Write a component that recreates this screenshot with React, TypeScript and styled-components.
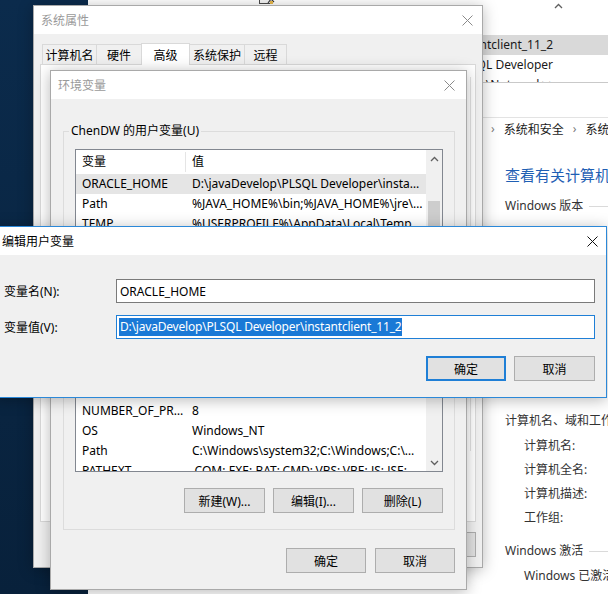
import React from "react";
import styled, { createGlobalStyle, css } from "styled-components";

const GlobalStyle = createGlobalStyle`
  html, body { margin: 0; padding: 0; background: #0a2846; }
  body {
    font-family: "Noto Sans", "Noto Sans CJK SC", sans-serif;
    font-size: 12px;
    color: #000;
  }
  * { box-sizing: border-box; }
`;

const Desktop = styled.div`
  position: relative;
  width: 608px;
  height: 594px;
  overflow: hidden;
  background: linear-gradient(180deg, #0b2b4c 0%, #08213b 100%);
`;

const Win = styled.div<{ $x: number; $y: number; $w: number; $h: number; $z: number; $active?: boolean }>`
  position: absolute;
  left: ${(p) => p.$x}px;
  top: ${(p) => p.$y}px;
  width: ${(p) => p.$w}px;
  height: ${(p) => p.$h}px;
  z-index: ${(p) => p.$z};
  display: flex;
  flex-direction: column;
  background: #f0f0f0;
  border: 1px solid ${(p) => (p.$active ? "#2b88d8" : "#a9a9a9")};
  box-shadow: 0 2px 14px rgba(0, 0, 0, 0.28);
`;

const TitleBar = styled.div<{ $active?: boolean }>`
  height: 28px;
  flex: none;
  display: flex;
  align-items: center;
  background: #fff;
  padding-left: 7px;
  color: ${(p) => (p.$active ? "#000" : "#9a9a9a")};
`;

const TitleText = styled.span`
  flex: 1;
  white-space: nowrap;
`;

const CloseBox = styled.div<{ $w: number; $active?: boolean }>`
  width: ${(p) => p.$w}px;
  height: 100%;
  display: flex;
  align-items: center;
  justify-content: center;
  color: ${(p) => (p.$active ? "#111" : "#8a8a8a")};
`;

const CloseIcon = () => (
  <svg width="11" height="11" viewBox="0 0 11 11">
    <path d="M0.5 0.5 L10.5 10.5 M10.5 0.5 L0.5 10.5" stroke="currentColor" strokeWidth="1" fill="none" />
  </svg>
);

const Chevron = ({ dir }: { dir: "up" | "down" }) => (
  <svg width="9" height="6" viewBox="0 0 9 6">
    <polyline
      points={dir === "up" ? "1,5 4.5,1.5 8,5" : "1,1 4.5,4.5 8,1"}
      fill="none"
      stroke="#5f5f5f"
      strokeWidth="1.3"
    />
  </svg>
);

/* ---------- generic controls ---------- */

const Btn = styled.div<{ $w: number; $default?: boolean }>`
  width: ${(p) => p.$w}px;
  height: 25px;
  flex: none;
  display: flex;
  align-items: center;
  justify-content: center;
  background: #e1e1e1;
  border: 1px solid ${(p) => (p.$default ? "#1f7fd6" : "#adadad")};
  ${(p) =>
    p.$default &&
    css`
      box-shadow: inset 0 0 0 1px #1f7fd6;
    `}
  white-space: nowrap;
`;

const ButtonRow = styled.div<{ $mt: number; $gap: number }>`
  display: flex;
  justify-content: flex-end;
  gap: ${(p) => p.$gap}px;
  margin-top: ${(p) => p.$mt}px;
  flex: none;
`;

/* ---------- system properties ---------- */

const SysBody = styled.div`
  flex: 1;
  display: flex;
  flex-direction: column;
  padding: 9px 6px 0 6px;
`;

const TabStrip = styled.div`
  display: flex;
  align-items: flex-end;
  height: 21px;
  padding-left: 3px;
`;

const Tab = styled.div<{ $w: number; $selected?: boolean }>`
  width: ${(p) => p.$w}px;
  height: ${(p) => (p.$selected ? 22 : 20)}px;
  margin-left: -1px;
  display: flex;
  align-items: center;
  justify-content: center;
  border: 1px solid #d9d9d9;
  border-bottom: none;
  background: ${(p) => (p.$selected ? "#fff" : "#f0f0f0")};
  position: relative;
  z-index: ${(p) => (p.$selected ? 2 : 1)};
  margin-bottom: ${(p) => (p.$selected ? -1 : 0)}px;
  white-space: nowrap;
`;

const TabPanel = styled.div`
  height: 458px;
  background: #fff;
  border: 1px solid #d9d9d9;
  flex: none;
  display: flex;
  justify-content: flex-end;
  padding: 0 4px;
`;

const PanelRule = styled.div`
  width: 1px;
  background: #e3e3e3;
  margin: 12px 0 70px;
`;

/* ---------- environment variables ---------- */

const EnvBody = styled.div`
  flex: 1;
  display: flex;
  flex-direction: column;
  padding: 24px 11px 0 12px;
`;

const Group = styled.fieldset<{ $mt?: number }>`
  margin: ${(p) => p.$mt ?? 0}px 0 0 0;
  padding: 10px 0 16px 0;
  border: 1px solid #dcdcdc;
  min-width: 0;
`;

const GroupLegend = styled.legend`
  margin-left: 5px;
  padding: 0 2px;
  line-height: 16px;
  font-size: 12px;
  white-space: nowrap;
`;

const GroupInner = styled.div`
  display: flex;
  flex-direction: column;
  padding: 0 11px;
`;

const ListBox = styled.div<{ $h: number }>`
  height: ${(p) => p.$h}px;
  border: 1px solid #828790;
  background: #fff;
  display: flex;
  overflow: hidden;
`;

const ListContent = styled.div`
  flex: 1;
  min-width: 0;
  display: flex;
  flex-direction: column;
  overflow: hidden;
`;

const HeaderRow = styled.div`
  height: 24px;
  flex: none;
  display: flex;
  align-items: center;
`;

const HeaderCell = styled.div<{ $first?: boolean }>`
  ${(p) =>
    p.$first
      ? css`
          width: 110px;
          border-right: 1px solid #e5e5e5;
        `
      : css`
          flex: 1;
        `}
  height: 20px;
  line-height: 20px;
  padding-left: 6px;
  flex: ${(p) => (p.$first ? "none" : 1)};
`;

const Row = styled.div<{ $selected?: boolean }>`
  height: 20px;
  flex: none;
  display: flex;
  line-height: 20px;
  background: ${(p) => (p.$selected ? "#e5e5e5" : "transparent")};
`;

const Cell = styled.div<{ $first?: boolean }>`
  ${(p) =>
    p.$first
      ? css`
          width: 110px;
          flex: none;
          padding: 0 2px 0 6px;
        `
      : css`
          flex: 1;
          min-width: 0;
          padding: 0 2px 0 6px;
        `}
  white-space: nowrap;
  overflow: hidden;
  text-overflow: ellipsis;
`;

const ScrollBar = styled.div`
  width: 16px;
  flex: none;
  background: #f0f0f0;
  display: flex;
  flex-direction: column;
`;

const ScrollArrow = styled.div<{ $end?: boolean }>`
  height: 17px;
  flex: none;
  display: flex;
  align-items: center;
  justify-content: center;
  margin-top: ${(p) => (p.$end ? "auto" : "0")};
`;

const Thumb = styled.div<{ $mt: number; $h: number }>`
  margin: ${(p) => p.$mt}px 2px 0 2px;
  height: ${(p) => p.$h}px;
  background: #cdcdcd;
  flex: none;
`;

/* ---------- edit dialog ---------- */

const EditBody = styled.div`
  flex: 1;
  display: flex;
  flex-direction: column;
  padding: 24px 11px 15px 9px;
`;

const FormRow = styled.div<{ $mt: number }>`
  display: flex;
  align-items: center;
  height: 24px;
  margin-top: ${(p) => p.$mt}px;
`;

const FormLabel = styled.div`
  width: 112px;
  flex: none;
  white-space: nowrap;
`;

const TextBox = styled.div<{ $focused?: boolean }>`
  flex: 1;
  height: 24px;
  background: #fff;
  border: 1px solid ${(p) => (p.$focused ? "#1f7fd6" : "#7a7a7a")};
  padding-left: 2px;
  display: flex;
  align-items: center;
  white-space: nowrap;
  overflow: hidden;
`;

const PlainText = styled.span`
  padding-left: 1px;
`;

const Selection = styled.span`
  background: #1a79d6;
  color: #fff;
  line-height: 18px;
  padding: 0 1px;
  letter-spacing: -0.2px;
`;

/* ---------- explorer window behind ---------- */

const Explorer = styled.div`
  position: absolute;
  left: 88px;
  top: 0;
  width: 530px;
  height: 594px;
  z-index: 1;
  background: #fff;
  display: flex;
  flex-direction: column;
  overflow: hidden;
`;

const TopStrip = styled.div`
  height: 34px;
  flex: none;
  display: flex;
  align-items: flex-start;
`;

const TopIcon = styled.div`
  margin-left: 170px;
  margin-top: -11px;
  width: 17px;
  height: 16px;
`;

const TopChevron = styled.div`
  margin-left: 279px;
  margin-top: 3px;
  display: flex;
`;

const Dropdown = styled.div`
  position: absolute;
  left: 0;
  right: 0;
  top: 35px;
  height: 48px;
  overflow: hidden;
  background: #fff;
  border-bottom: 1px solid #c9c9c9;
  z-index: 2;
`;

const DropRow = styled.div<{ $hl?: boolean }>`
  height: 20px;
  line-height: 20px;
  text-align: right;
  padding-right: 65px;
  background: ${(p) => (p.$hl ? "#d9d9d9" : "#fff")};
  white-space: nowrap;
  color: #1a1a1a;
`;

const AddressBar = styled.div`
  margin-top: 83px;
  height: 22px;
  flex: none;
  border-top: 1px solid #e3e3e3;
  display: flex;
  align-items: center;
  gap: 9px;
  padding-left: 403px;
  white-space: nowrap;
`;

const Crumb = styled.span<{ $sep?: boolean }>`
  color: ${(p) => (p.$sep ? "#7a7a7a" : "#1a1a1a")};
`;

const Main = styled.div`
  display: flex;
  flex-direction: column;
  padding-left: 417px;
  white-space: nowrap;
`;

const Heading = styled.div`
  margin-top: 24px;
  font-size: 15px;
  line-height: 24px;
  color: #1f5fb4;
`;

const Section = styled.div<{ $mt: number }>`
  margin-top: ${(p) => p.$mt}px;
  display: flex;
  align-items: center;
  line-height: 18px;
  color: #333;
  &::after {
    content: "";
    flex: 1;
    height: 1px;
    background: #dadada;
    margin-left: 6px;
  }
`;

const InfoItem = styled.div<{ $mt?: number }>`
  margin-top: ${(p) => p.$mt ?? 0}px;
  padding-left: 19px;
  line-height: 24px;
  color: #333;
`;

/* ---------- data ---------- */

const userVars = [
  { name: "ORACLE_HOME", value: "D:\\javaDevelop\\PLSQL Developer\\instantclient_11_2", selected: true },
  { name: "Path", value: "%JAVA_HOME%\\bin;%JAVA_HOME%\\jre\\bin;C:\\Users\\ChenDW\\AppData" },
  { name: "TEMP", value: "%USERPROFILE%\\AppData\\Local\\Temp" },
  { name: "TMP", value: "%USERPROFILE%\\AppData\\Local\\Temp" },
];

const sysVars = [
  { name: "ComSpec", value: "C:\\Windows\\system32\\cmd.exe" },
  { name: "DriverData", value: "C:\\Windows\\System32\\Drivers\\DriverData" },
  { name: "NUMBER_OF_PROCESSORS", value: "8" },
  { name: "OS", value: "Windows_NT" },
  { name: "Path", value: "C:\\Windows\\system32;C:\\Windows;C:\\Windows\\System32\\Wbem;C:\\Windows" },
  { name: "PATHEXT", value: ".COM;.EXE;.BAT;.CMD;.VBS;.VBE;.JS;.JSE;.WSF;.WSH;.MSC" },
];

const tabs = [
  { label: "计算机名", w: 55 },
  { label: "硬件", w: 46 },
  { label: "高级", w: 49, selected: true },
  { label: "系统保护", w: 56 },
  { label: "远程", w: 43 },
];

type Var = { name: string; value: string; selected?: boolean };

const VarList = ({
  vars,
  height,
  thumbTop,
  thumbH,
}: {
  vars: Var[];
  height: number;
  thumbTop: number;
  thumbH: number;
}) => (
  <ListBox $h={height}>
    <ListContent>
      <HeaderRow>
        <HeaderCell $first>变量</HeaderCell>
        <HeaderCell>值</HeaderCell>
      </HeaderRow>
      {vars.map((v, i) => (
        <Row key={i} $selected={v.selected}>
          <Cell $first>{v.name}</Cell>
          <Cell>{v.value}</Cell>
        </Row>
      ))}
    </ListContent>
    <ScrollBar>
      <ScrollArrow>
        <Chevron dir="up" />
      </ScrollArrow>
      <Thumb $mt={thumbTop} $h={thumbH} />
      <ScrollArrow $end>
        <Chevron dir="down" />
      </ScrollArrow>
    </ScrollBar>
  </ListBox>
);

export default function App() {
  return (
    <>
      <GlobalStyle />
      <Desktop>
        <Explorer>
          <TopStrip>
            <TopIcon>
              <svg width="17" height="16" viewBox="0 0 17 16">
                <rect x="1.5" y="1.5" width="13" height="13" fill="#f4f4f4" stroke="#4a4a4a" />
                <path d="M10 14 L13 10 L16 13" stroke="#3a3a3a" strokeWidth="1.2" fill="none" />
                <rect x="12" y="12" width="3" height="3" fill="#e8b84a" />
              </svg>
            </TopIcon>
            <TopChevron>
              <Chevron dir="up" />
            </TopChevron>
          </TopStrip>
          <Dropdown>
            <DropRow $hl>D:\javaDevelop\PLSQL Developer\instantclient_11_2</DropRow>
            <DropRow>D:\javaDevelop\PLSQL Developer</DropRow>
            <DropRow>D:\Program Files\Notepad++</DropRow>
          </Dropdown>
          <AddressBar>
            <Crumb $sep>›</Crumb>
            <Crumb>系统和安全</Crumb>
            <Crumb $sep>›</Crumb>
            <Crumb>系统</Crumb>
          </AddressBar>
          <Main>
            <Heading>查看有关计算机的基本信息</Heading>
            <Section $mt={10}>Windows 版本</Section>
            <Section $mt={197}>计算机名、域和工作组设置</Section>
            <InfoItem $mt={4}>计算机名:</InfoItem>
            <InfoItem>计算机全名:</InfoItem>
            <InfoItem>计算机描述:</InfoItem>
            <InfoItem>工作组:</InfoItem>
            <Section $mt={12}>Windows 激活</Section>
            <InfoItem $mt={4}>Windows 已激活</InfoItem>
          </Main>
        </Explorer>

        <Win $x={33} $y={5} $w={450} $h={563} $z={2}>
          <TitleBar>
            <TitleText>系统属性</TitleText>
            <CloseBox $w={30}>
              <CloseIcon />
            </CloseBox>
          </TitleBar>
          <SysBody>
            <TabStrip>
              {tabs.map((t) => (
                <Tab key={t.label} $w={t.w} $selected={t.selected}>
                  {t.label}
                </Tab>
              ))}
            </TabStrip>
            <TabPanel>
              <PanelRule />
            </TabPanel>
            <ButtonRow $mt={10} $gap={6}>
              <Btn $w={75}>确定</Btn>
              <Btn $w={75}>取消</Btn>
              <Btn $w={75}>应用(A)</Btn>
            </ButtonRow>
          </SysBody>
        </Win>

        <Win $x={50} $y={70} $w={417} $h={520} $z={3}>
          <TitleBar>
            <TitleText>环境变量</TitleText>
            <CloseBox $w={34}>
              <CloseIcon />
            </CloseBox>
          </TitleBar>
          <EnvBody>
            <Group>
              <GroupLegend>ChenDW 的用户变量(U)</GroupLegend>
              <GroupInner>
                <VarList vars={userVars} height={96} thumbTop={34} thumbH={25} />
                <ButtonRow $mt={16} $gap={8}>
                  <Btn $w={81}>新建(N)...</Btn>
                  <Btn $w={81}>编辑(E)...</Btn>
                  <Btn $w={81}>删除(D)</Btn>
                </ButtonRow>
              </GroupInner>
            </Group>
            <Group $mt={7}>
              <GroupLegend>系统变量(S)</GroupLegend>
              <GroupInner>
                <VarList vars={sysVars} height={136} thumbTop={0} thumbH={40} />
                <ButtonRow $mt={16} $gap={8}>
                  <Btn $w={81}>新建(W)...</Btn>
                  <Btn $w={81}>编辑(I)...</Btn>
                  <Btn $w={81}>删除(L)</Btn>
                </ButtonRow>
              </GroupInner>
            </Group>
            <ButtonRow $mt={18} $gap={9}>
              <Btn $w={80}>确定</Btn>
              <Btn $w={80}>取消</Btn>
            </ButtonRow>
          </EnvBody>
        </Win>

        <Win $x={-6} $y={226} $w={613} $h={172} $z={4} $active>
          <TitleBar $active>
            <TitleText>编辑用户变量</TitleText>
            <CloseBox $w={28} $active>
              <CloseIcon />
            </CloseBox>
          </TitleBar>
          <EditBody>
            <FormRow $mt={0}>
              <FormLabel>变量名(N):</FormLabel>
              <TextBox>
                <PlainText>ORACLE_HOME</PlainText>
              </TextBox>
            </FormRow>
            <FormRow $mt={12}>
              <FormLabel>变量值(V):</FormLabel>
              <TextBox $focused>
                <Selection>D:\javaDevelop\PLSQL Developer\instantclient_11_2</Selection>
              </TextBox>
            </FormRow>
            <ButtonRow $mt={17} $gap={8}>
              <Btn $w={80} $default>确定</Btn>
              <Btn $w={81}>取消</Btn>
            </ButtonRow>
          </EditBody>
        </Win>
      </Desktop>
    </>
  );
}
